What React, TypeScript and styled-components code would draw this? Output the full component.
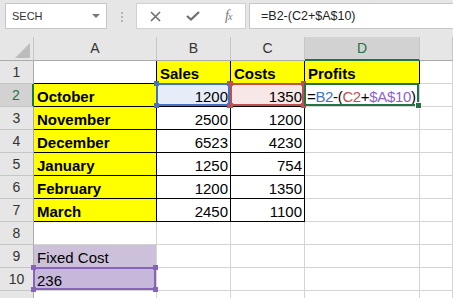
import React from 'react';
import styled, { createGlobalStyle } from 'styled-components';

const GlobalStyle = createGlobalStyle`
  html, body {
    margin: 0;
    padding: 0;
    background: #fff;
    overflow: hidden;
  }
  body {
    font-family: "Liberation Sans", Arial, sans-serif;
  }
`;

const GREEN = '#217346';
const YELLOW = '#ffff00';
const LAVENDER = '#ccc0da';

const Window = styled.div`
  width: 453px;
  height: 298px;
  overflow: hidden;
  background: #e6e6e6;
`;

const FormulaBar = styled.div`
  display: flex;
  align-items: flex-start;
  height: 37px;
  box-sizing: border-box;
  padding: 3px 0 0 5px;
`;

const NameBox = styled.div`
  width: 102px;
  height: 26px;
  box-sizing: border-box;
  background: #fff;
  border: 1px solid #c6c6c6;
  display: flex;
  align-items: center;
  justify-content: space-between;
  padding: 0 6px 0 6px;
  font-size: 11px;
  color: #333;
`;

const DropArrow = styled.span`
  width: 0;
  height: 0;
  border-left: 4px solid transparent;
  border-right: 4px solid transparent;
  border-top: 4px solid #7a7a7a;
`;

const Grip = styled.div`
  display: flex;
  flex-direction: column;
  gap: 2px;
  margin: 9px 13px 0 14px;

  span {
    width: 2px;
    height: 2px;
    background: #b3b3b3;
  }
`;

const ButtonBox = styled.div`
  width: 110px;
  height: 26px;
  box-sizing: border-box;
  background: #fff;
  border: 1px solid #d0d0d0;
  display: flex;
  align-items: center;
  padding-left: 13px;
  gap: 25px;
  color: #6a6a6a;
`;

const Fx = styled.span`
  font-family: "Liberation Serif", "Times New Roman", serif;
  font-style: italic;
  font-size: 14px;
  color: #777;
  letter-spacing: -1px;

  small {
    font-size: 10px;
  }
`;

const FormulaInput = styled.div`
  flex: 1;
  height: 26px;
  box-sizing: border-box;
  margin-left: 3px;
  background: #fff;
  border: 1px solid #c6c6c6;
  border-right: none;
  padding-left: 11px;
  font-size: 12.5px;
  line-height: 24px;
  color: #222;
`;

const Sheet = styled.div`
  display: grid;
  grid-template-columns: 34px 123px 74px 74px 115px 33px;
  grid-template-rows: 24px;
  grid-auto-rows: 23px;
  background: #fff;
`;

const Corner = styled.div`
  background: #e6e6e6;
  border-right: 1px solid #c6c6c6;
  border-bottom: 1px solid #ababab;
  display: flex;
  align-items: flex-end;
  justify-content: flex-end;
  padding: 0 3px 2px 0;

  span {
    width: 0;
    height: 0;
    border-left: 15px solid transparent;
    border-bottom: 15px solid #bcbcbc;
  }
`;

const ColHeader = styled.div<{ $active?: boolean }>`
  background: ${({ $active }) => ($active ? '#d2d2d2' : '#e6e6e6')};
  color: ${({ $active }) => ($active ? GREEN : '#333')};
  border-right: 1px solid #c6c6c6;
  border-bottom: ${({ $active }) => ($active ? `2px solid ${GREEN}` : '1px solid #ababab')};
  font-size: 14px;
  line-height: 23px;
  text-align: center;
`;

const RowHeader = styled.div<{ $active?: boolean }>`
  background: ${({ $active }) => ($active ? '#d2d2d2' : '#e6e6e6')};
  color: ${({ $active }) => ($active ? GREEN : '#333')};
  border-right: ${({ $active }) => ($active ? `2px solid ${GREEN}` : '1px solid #ababab')};
  border-bottom: 1px solid #c6c6c6;
  font-size: 14px;
  line-height: 22px;
  text-align: center;
`;

const Cell = styled.div<{
  $fill?: string;
  $bold?: boolean;
  $right?: boolean;
  $rb?: string;
  $bb?: string;
}>`
  position: relative;
  box-sizing: border-box;
  background: ${({ $fill }) => $fill || '#fff'};
  border-right: 1px solid ${({ $rb }) => $rb || '#d4d4d4'};
  border-bottom: 1px solid ${({ $bb }) => $bb || '#d4d4d4'};
  padding: 3px 2px 0 3px;
  font-size: 15px;
  line-height: 19px;
  font-weight: ${({ $bold }) => ($bold ? 700 : 400)};
  text-align: ${({ $right }) => ($right ? 'right' : 'left')};
  color: #000;
  white-space: nowrap;
`;

const Range = styled.div<{ $color: string }>`
  position: absolute;
  top: -1px;
  left: -1px;
  right: 0;
  bottom: 0;
  border: 2px solid ${({ $color }) => $color};
  z-index: 2;
  pointer-events: none;
`;

const Handle = styled.span<{ $color: string; $v: 'top' | 'bottom'; $h: 'left' | 'right' }>`
  position: absolute;
  width: 5px;
  height: 5px;
  background: ${({ $color }) => $color};
  ${({ $v }) => $v}: -4px;
  ${({ $h }) => $h}: -4px;
`;

const FillHandle = styled.span`
  position: absolute;
  right: -5px;
  bottom: -5px;
  width: 5px;
  height: 5px;
  background: ${GREEN};
  border: 1px solid #fff;
`;

const Formula = styled.span`
  letter-spacing: -0.35px;
  margin-left: -1px;
`;

const Token = styled.span<{ $color?: string }>`
  color: ${({ $color }) => $color || '#000'};
`;

type Sel = 'blue' | 'red' | 'active' | 'purple';

interface CellData {
  t?: React.ReactNode;
  bold?: boolean;
  right?: boolean;
  fill?: string;
  box?: boolean;
  rb?: string;
  bb?: string;
  sel?: Sel;
}

const SEL_COLORS: Record<Exclude<Sel, 'active'>, string> = {
  blue: '#4472c4',
  red: '#c0504d',
  purple: '#8764b8',
};

const formula = (
  <Formula>
    <Token>=</Token>
    <Token $color="#4472c4">B2</Token>
    <Token>-(</Token>
    <Token $color="#c0504d">C2</Token>
    <Token>+</Token>
    <Token $color="#8e63c6">$A$10</Token>
    <Token>)</Token>
  </Formula>
);

const months: [string, string, string][] = [
  ['October', '1200', '1350'],
  ['November', '2500', '1200'],
  ['December', '6523', '4230'],
  ['January', '1250', '754'],
  ['February', '1200', '1350'],
  ['March', '2450', '1100'],
];

const empty = (): CellData[] => [{}, {}, {}, {}, {}];

const rows: CellData[][] = [
  [
    { rb: '#000', bb: '#000' },
    { t: 'Sales', bold: true, fill: YELLOW, box: true },
    { t: 'Costs', bold: true, fill: YELLOW, box: true },
    { t: 'Profits', bold: true, fill: YELLOW, box: true },
    {},
  ],
  ...months.map(([m, s, c], i): CellData[] => [
    { t: m, bold: true, fill: YELLOW, box: true },
    { t: s, right: true, box: true, ...(i === 0 ? { fill: '#e7edf8', sel: 'blue' as Sel } : {}) },
    { t: c, right: true, box: true, ...(i === 0 ? { fill: '#f8e7e7', sel: 'red' as Sel } : {}) },
    i === 0 ? { t: formula, sel: 'active' } : {},
    {},
  ]),
  empty(),
  [{ t: 'Fixed Cost', fill: LAVENDER, bb: '#f2eef7' }, {}, {}, {}, {}],
  [{ t: '236', fill: '#c6b8da', sel: 'purple' }, {}, {}, {}, {}],
  empty(),
];

const corners: ['top' | 'bottom', 'left' | 'right'][] = [
  ['top', 'left'],
  ['top', 'right'],
  ['bottom', 'left'],
  ['bottom', 'right'],
];

const Selection: React.FC<{ sel: Sel }> = ({ sel }) => {
  if (sel === 'active') {
    return (
      <Range $color={GREEN}>
        <FillHandle />
      </Range>
    );
  }
  const color = SEL_COLORS[sel];
  return (
    <Range $color={color}>
      {corners.map(([v, h]) => (
        <Handle key={v + h} $color={color} $v={v} $h={h} />
      ))}
    </Range>
  );
};

const CloseIcon = () => (
  <svg width="11" height="11" viewBox="0 0 11 11">
    <path d="M1 1L10 10M10 1L1 10" stroke="#6e6e6e" strokeWidth="1.6" fill="none" />
  </svg>
);

const CheckIcon = () => (
  <svg width="14" height="10" viewBox="0 0 14 10">
    <path d="M1 5L5 8.5L13 1" stroke="#6e6e6e" strokeWidth="2.2" fill="none" />
  </svg>
);

const App: React.FC = () => {
  return (
    <>
      <GlobalStyle />
      <Window>
        <FormulaBar>
          <NameBox>
            SECH
            <DropArrow />
          </NameBox>
          <Grip>
            <span />
            <span />
            <span />
          </Grip>
          <ButtonBox>
            <CloseIcon />
            <CheckIcon />
            <Fx>
              f<small>x</small>
            </Fx>
          </ButtonBox>
          <FormulaInput>=B2-(C2+$A$10)</FormulaInput>
        </FormulaBar>
        <Sheet>
          <Corner>
            <span />
          </Corner>
          {['A', 'B', 'C', 'D', ''].map((l) => (
            <ColHeader key={l || 'E'} $active={l === 'D'}>
              {l}
            </ColHeader>
          ))}
          {rows.map((cells, r) => (
            <React.Fragment key={r}>
              {/* row 11 sits below the fold; only its gridlines peek in */}
              <RowHeader $active={r === 1}>{r < 10 ? r + 1 : null}</RowHeader>
              {cells.map((c, ci) => (
                <Cell
                  key={ci}
                  $fill={c.fill}
                  $bold={c.bold}
                  $right={c.right}
                  $rb={c.box ? '#000' : c.rb}
                  $bb={c.box ? '#000' : c.bb}
                >
                  {c.t}
                  {c.sel && <Selection sel={c.sel} />}
                </Cell>
              ))}
            </React.Fragment>
          ))}
        </Sheet>
      </Window>
    </>
  );
};

export default App;
